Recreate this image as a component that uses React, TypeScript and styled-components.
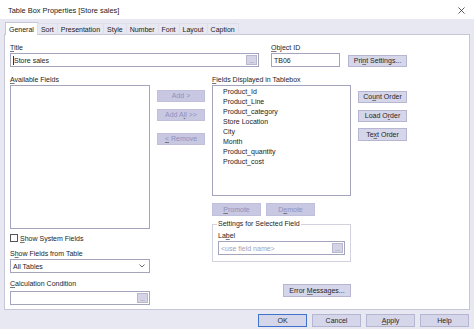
import styled, { createGlobalStyle } from "styled-components";

const Global = createGlobalStyle`
  body {
    margin: 0;
    font-family: "Liberation Sans", Arial, sans-serif;
    font-size: 7px;
    color: #1e1e1e;
  }
  * { box-sizing: border-box; }
  u { text-decoration-color: #777; }
`;

const Window = styled.div`
  width: 474px;
  height: 332px;
  background: #fff;
  display: flex;
  flex-direction: column;
`;

const TitleBar = styled.div`
  height: 19px;
  display: flex;
  align-items: center;
  padding: 2px 8px 0 8px;
  font-size: 7.4px;
  color: #222;
`;

const CloseIcon = styled.svg`
  margin-left: auto;
  margin-right: 1px;
`;

const Body = styled.div`
  flex: 1;
  margin-bottom: 3px;
  background: #e8e8f2;
  padding: 3px 4px 0 4px;
  display: flex;
  flex-direction: column;
`;

const Tabs = styled.div`
  display: flex;
  padding-left: 1px;
  height: 13px;
  position: relative;
  z-index: 1;
`;

const Tab = styled.div<{ $active?: boolean }>`
  padding: 0 ${(p) => (p.$active ? 3 : 3)}px;
  height: ${(p) => (p.$active ? "13px" : "12px")};
  margin-top: ${(p) => (p.$active ? "0" : "1px")};
  display: flex;
  align-items: center;
  background: ${(p) => (p.$active ? "#fff" : "#e8e8f2")};
  border: 1px solid ${(p) => (p.$active ? "#c6c6d6" : "#dedee9")};
  border-bottom: ${(p) => (p.$active ? "none" : "1px solid #c6c6d6")};
  margin-right: -1px;
  color: #222;
`;

const Panel = styled.div`
  height: 276px;
  margin-top: -1px;
  background: #fff;
  border: 1px solid #c6c6d6;
  padding: 8px 5px 0 5px;
`;

const TopRow = styled.div`
  display: flex;
  align-items: flex-start;
`;

const Field = styled.div<{ $w: number; $ml?: number }>`
  width: ${(p) => p.$w}px;
  margin-left: ${(p) => p.$ml ?? 0}px;
  display: flex;
  flex-direction: column;
`;

const Label = styled.div<{ $mt?: number }>`
  height: 9px;
  line-height: 9px;
  margin-top: ${(p) => p.$mt ?? 0}px;
  margin-bottom: 1px;
  white-space: nowrap;
  color: #1e1e1e;
`;

const Input = styled.div<{ $mt?: number }>`
  height: 14px;
  width: 100%;
  margin-top: ${(p) => p.$mt ?? 0}px;
  border: 1px solid #a4a4bc;
  background: #fff;
  display: flex;
  align-items: center;
  padding-left: 2px;
  white-space: nowrap;
`;

const Caret = styled.span`
  display: inline-block;
  width: 1px;
  height: 9px;
  background: #333;
`;

const Placeholder = styled.span`
  color: #a2a2b4;
`;

const Dots = styled.div`
  margin-left: auto;
  margin-right: 1px;
  width: 11px;
  height: 10px;
  background: #d4d4e6;
  border: 1px solid #b8b8cc;
  color: #666;
  font-size: 6px;
  display: flex;
  align-items: flex-end;
  justify-content: center;
  line-height: 6px;
`;

const Btn = styled.div<{ $w: number; $h?: number; $mt?: number; $ml?: number; $off?: boolean; $def?: boolean; $end?: boolean }>`
  width: ${(p) => p.$w}px;
  height: ${(p) => p.$h ?? 12}px;
  line-height: ${(p) => (p.$h ?? 12) - 2}px;
  margin-top: ${(p) => p.$mt ?? 0}px;
  margin-left: ${(p) => p.$ml ?? 0}px;
  align-self: ${(p) => (p.$end ? "flex-end" : "auto")};
  flex-shrink: 0;
  text-align: center;
  white-space: nowrap;
  background: ${(p) => (p.$off ? "#c8c8e2" : "#d6d6ea")};
  border: 1px solid ${(p) => (p.$def ? "#3f72cc" : p.$off ? "#c0c0dc" : "#b6b6d2")};
  color: ${(p) => (p.$off ? "#9090bc" : "#262626")};
`;

const Main = styled.div`
  display: flex;
  margin-top: 8px;
`;

const Col = styled.div<{ $w: number; $ml?: number; $pt?: number }>`
  width: ${(p) => p.$w}px;
  margin-left: ${(p) => p.$ml ?? 0}px;
  padding-top: ${(p) => p.$pt ?? 0}px;
  display: flex;
  flex-direction: column;
`;

const ListBox = styled.div<{ $h: number }>`
  height: ${(p) => p.$h}px;
  border: 1px solid #a4a4bc;
  background: #fff;
  padding: 1px 0 0 10px;
`;

const ListItem = styled.div`
  height: 10px;
  line-height: 10px;
  color: #222;
`;

const CheckRow = styled.div`
  display: flex;
  align-items: center;
  gap: 2px;
  margin-top: 5px;
  height: 8px;
`;

const Box = styled.div`
  width: 8px;
  height: 8px;
  border: 1px solid #555;
  background: #fff;
`;

const Select = styled(Input)`
  padding-right: 4px;
  justify-content: space-between;
`;

const BtnRow = styled.div`
  display: flex;
  gap: 5px;
  margin-top: 7px;
`;

const Group = styled.fieldset`
  margin: 4px 0 0 0;
  padding: 0 5px 4px 5px;
  border: 1px solid #d2d2de;
  height: 42px;
  min-width: 0;
`;

const Legend = styled.legend`
  padding: 0 1px;
  margin-left: -1px;
  font-size: 7px;
  line-height: 8px;
  color: #1e1e1e;
`;

const Footer = styled.div`
  display: flex;
  justify-content: flex-end;
  gap: 5px;
  margin-top: 4px;
  padding-right: 1px;
`;

function Chevron() {
  return (
    <svg width="6" height="4" viewBox="0 0 6 4">
      <polyline points="0.5,0.5 3,3 5.5,0.5" fill="none" stroke="#555" strokeWidth="0.9" />
    </svg>
  );
}

const tabs = ["General", "Sort", "Presentation", "Style", "Number", "Font", "Layout", "Caption"];

const fields = [
  "Product_Id",
  "Product_Line",
  "Product_category",
  "Store Location",
  "City",
  "Month",
  "Product_quantity",
  "Product_cost",
];

export default function App() {
  return (
    <>
      <Global />
      <Window>
        <TitleBar>
          Table Box Properties [Store sales]
          <CloseIcon width="7" height="7" viewBox="0 0 7 7">
            <path d="M0.5 0.5 L6.5 6.5 M6.5 0.5 L0.5 6.5" stroke="#333" strokeWidth="0.8" />
          </CloseIcon>
        </TitleBar>
        <Body>
          <Tabs>
            {tabs.map((t, i) => (
              <Tab key={t} $active={i === 0}>{t}</Tab>
            ))}
          </Tabs>
          <Panel>
            <TopRow>
              <Field $w={249}>
                <Label><u>T</u>itle</Label>
                <Input>
                  <Caret />
                  Store sales
                  <Dots>...</Dots>
                </Input>
              </Field>
              <Field $w={69} $ml={12}>
                <Label><u>O</u>bject ID</Label>
                <Input>TB06</Input>
              </Field>
              <Btn $w={59} $mt={12} $ml={8}>
                Pri<u>n</u>t Settings...
              </Btn>
            </TopRow>

            <Main>
              <Col $w={140}>
                <Label><u>A</u>vailable Fields</Label>
                <ListBox $h={144} />
                <CheckRow>
                  <Box />
                  <span><u>S</u>how System Fields</span>
                </CheckRow>
                <Label $mt={7}>S<u>h</u>ow Fields from Table</Label>
                <Select>
                  All Tables
                  <Chevron />
                </Select>
                <Label $mt={6}><u>C</u>alculation Condition</Label>
                <Input $mt={2}>
                  <Dots>...</Dots>
                </Input>
              </Col>

              <Col $w={48} $ml={7} $pt={15}>
                <Btn $w={48} $off>Add &gt;</Btn>
                <Btn $w={48} $mt={7} $off>Add A<u>l</u>l &gt;&gt;</Btn>
                <Btn $w={48} $mt={12} $off><u>&lt;</u> Remove</Btn>
              </Col>

              <Col $w={139} $ml={7}>
                <Label><u>F</u>ields Displayed in Tablebox</Label>
                <ListBox $h={111}>
                  {fields.map((f) => (
                    <ListItem key={f}>{f}</ListItem>
                  ))}
                </ListBox>
                <BtnRow>
                  <Btn $w={49} $h={13} $off><u>P</u>romote</Btn>
                  <Btn $w={49} $h={13} $off>D<u>e</u>mote</Btn>
                </BtnRow>
                <Group>
                  <Legend>Settings for Selected Field</Legend>
                  <Label $mt={3}>La<u>b</u>el</Label>
                  <Input $mt={1}>
                    <Placeholder>&lt;use field name&gt;</Placeholder>
                    <Dots>...</Dots>
                  </Input>
                </Group>
                <Btn $w={68} $h={13} $mt={22} $end>
                  Error <u>M</u>essages...
                </Btn>
              </Col>

              <Col $w={49} $ml={7} $pt={16}>
                <Btn $w={49}>Co<u>u</u>nt Order</Btn>
                <Btn $w={49} $mt={7}>Load O<u>r</u>der</Btn>
                <Btn $w={49} $h={13} $mt={6}>Te<u>x</u>t Order</Btn>
              </Col>
            </Main>
          </Panel>
          <Footer>
            <Btn $w={49} $h={13} $def>OK</Btn>
            <Btn $w={49} $h={13}>Cancel</Btn>
            <Btn $w={49} $h={13}><u>A</u>pply</Btn>
            <Btn $w={49} $h={13}>Help</Btn>
          </Footer>
        </Body>
      </Window>
    </>
  );
}
